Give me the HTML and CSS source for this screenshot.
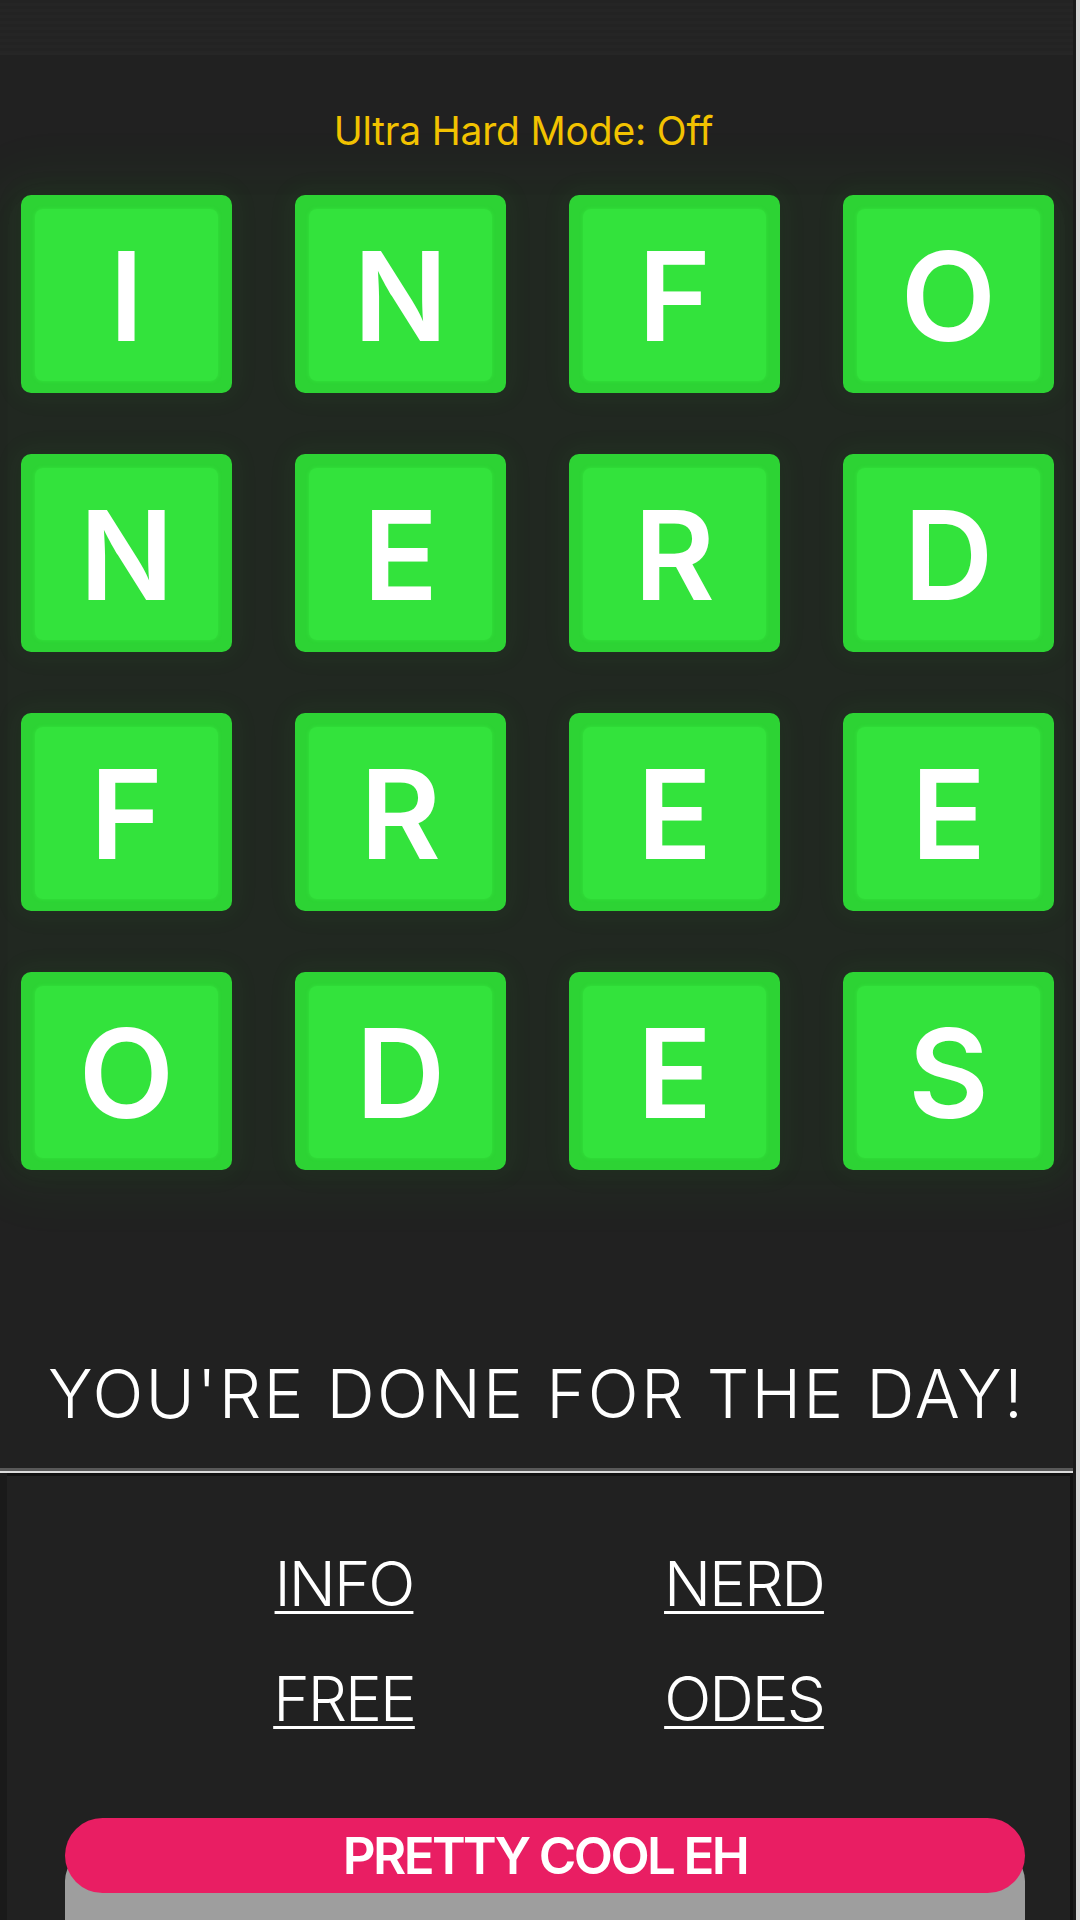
FILE: index.html
```html
<!DOCTYPE html>
<html lang="en">
<head>
<meta charset="utf-8">
<title>Word Grid</title>
<link rel="stylesheet" href="styles.css">
</head>
<body>
<div class="app">
  <main class="main">
    <header class="topbar"></header>
    <p class="mode">Ultra Hard Mode: Off</p>
    <div class="grid">
      <div class="tile"><span class="face">I</span></div>
      <div class="tile"><span class="face">N</span></div>
      <div class="tile"><span class="face">F</span></div>
      <div class="tile"><span class="face">O</span></div>
      <div class="tile"><span class="face">N</span></div>
      <div class="tile"><span class="face">E</span></div>
      <div class="tile"><span class="face">R</span></div>
      <div class="tile"><span class="face">D</span></div>
      <div class="tile"><span class="face">F</span></div>
      <div class="tile"><span class="face">R</span></div>
      <div class="tile"><span class="face">E</span></div>
      <div class="tile"><span class="face">E</span></div>
      <div class="tile"><span class="face">O</span></div>
      <div class="tile"><span class="face">D</span></div>
      <div class="tile"><span class="face">E</span></div>
      <div class="tile"><span class="face">S</span></div>
    </div>
    <h2 class="done">YOU'RE DONE FOR THE DAY!</h2>
  </main>
  <hr class="divider">
  <footer class="footer">
    <nav class="links">
      <a class="link" href="#">INFO</a>
      <a class="link" href="#">NERD</a>
      <a class="link" href="#">FREE</a>
      <a class="link" href="#">ODES</a>
    </nav>
    <div class="promo">
      <button class="cool">PRETTY COOL EH</button>
      <div class="card"></div>
    </div>
  </footer>
</div>
</body>
</html>
```

FILE: styles.css
```css
html, body {
  margin: 0;
  padding: 0;
  height: 1920px;
  overflow: hidden;
  background: #d6d6d6;
}

.app {
  width: 1076px;
  height: 1920px;
  background: #1a1a1a;
  font-family: Inter, "Noto Sans", sans-serif;
  overflow: hidden;
}

.main {
  width: 1073px;
  background: #212121;
  padding-bottom: 34px;
  overflow: hidden;
}

.topbar {
  height: 53px;
  background: repeating-linear-gradient(180deg, #232323 0px, #232323 3px, #252525 3px, #252525 6px);
  border-bottom: 2px solid #262626;
}

.mode {
  margin: 56px 0 0;
  padding-right: 26px;
  text-align: center;
  color: #f2c200;
  font-size: 39px;
  line-height: 40px;
  font-weight: 400;
  letter-spacing: -0.2px;
}

.grid {
  margin: 44px 8px 0 8px;
  padding-left: 13px;
  display: grid;
  grid-template-columns: repeat(4, 211px);
  grid-auto-rows: 198px;
  column-gap: 63px;
  row-gap: 61px;
  background: rgba(46, 210, 56, 0.045);
  border-radius: 30px;
  box-shadow: 0 0 50px 30px rgba(46, 210, 56, 0.045);
}

.tile {
  display: flex;
  padding: 14px 14px 12px 14px;
  background: #2dd334;
  border-radius: 10px;
  box-shadow: 0 0 24px 6px rgba(46, 210, 56, 0.06);
}

.face {
  flex: 1;
  display: flex;
  align-items: center;
  justify-content: center;
  background: #33e33c;
  border-radius: 8px;
  box-shadow: 0 0 3px 1px #31dd39;
  color: #ffffff;
  font-size: 124px;
  line-height: 1;
  font-weight: 600;
  padding-top: 2px;
}

.done {
  margin: 184px 0 0;
  text-align: center;
  color: #ffffff;
  font-size: 67px;
  line-height: 80px;
  font-weight: 300;
  letter-spacing: 2.2px;
}

.divider {
  margin: 0;
  height: 0;
  width: 1073px;
  border: 0;
  border-top: 3px solid #585858;
  border-bottom: 2px solid #dcdcdc;
}

.footer {
  margin-left: 7px;
  width: 1066px;
  height: 460px;
  background: #212121;
  border-top: 3px solid #111111;
  border-right: 3px solid #111111;
  padding-top: 73px;
  box-sizing: border-box;
}

.links {
  width: 800px;
  margin-left: 137px;
  display: grid;
  grid-template-columns: 400px 400px;
  row-gap: 45px;
  justify-items: center;
}

.link {
  color: #ffffff;
  font-size: 62px;
  line-height: 70px;
  font-weight: 300;
  letter-spacing: -2px;
  text-decoration: underline;
  text-decoration-thickness: 3px;
  text-underline-offset: 5px;
}

.promo {
  margin-top: 84px;
  margin-left: 58px;
  width: 960px;
}

.cool {
  position: relative;
  z-index: 1;
  display: block;
  width: 960px;
  height: 75px;
  border: 0;
  border-radius: 38px;
  background: #e91e63;
  color: #ffffff;
  font-family: Inter, "Noto Sans", sans-serif;
  font-size: 51px;
  font-weight: 600;
  letter-spacing: -2.6px;
  line-height: 75px;
  padding: 0;
}

.card {
  margin-top: -42px;
  height: 120px;
  background: #9e9e9e;
  border-radius: 30px 30px 0 0;
}
```
